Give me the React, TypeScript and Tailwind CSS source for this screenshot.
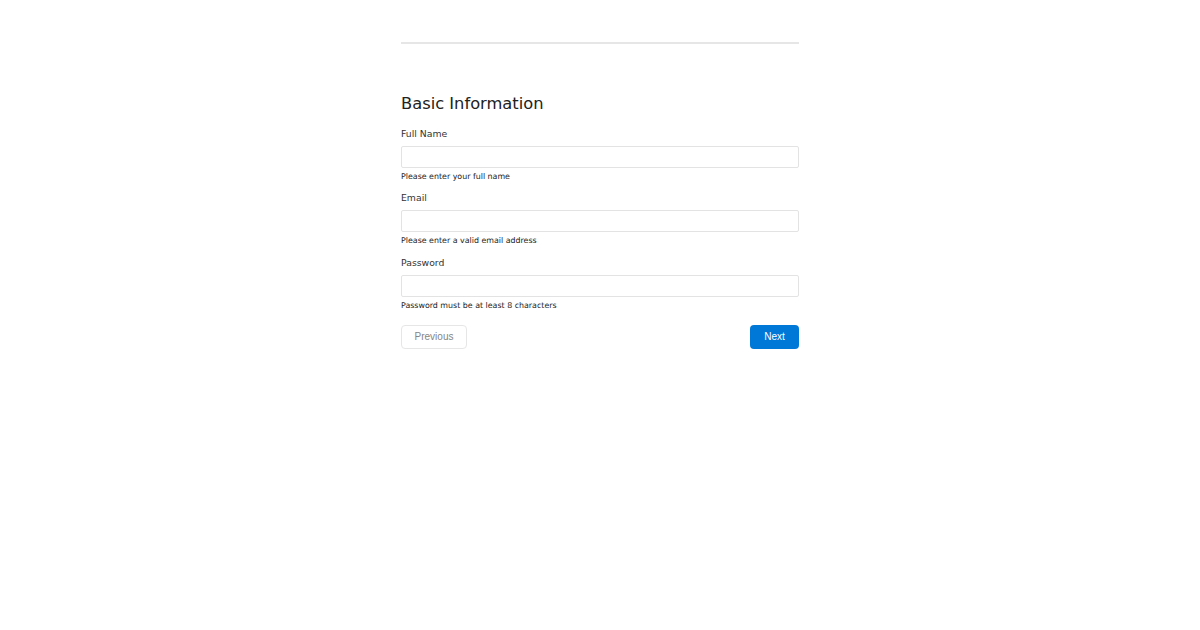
import React from "react";

const fields = [
  { label: "Full Name", type: "text", help: "Please enter your full name" },
  { label: "Email", type: "email", help: "Please enter a valid email address" },
  { label: "Password", type: "password", help: "Password must be at least 8 characters" },
];

export default function App() {
  return (
    <div className="min-h-screen bg-white font-['DejaVu_Sans',sans-serif] text-[#333]">
      <div className="mx-auto w-[398px] pt-[42px]">
        {/* progress track */}
        <div className="h-[2px] bg-[#e6e6e6]" />

        <h2 className="mt-[50px] text-[16.3px] leading-[20px] text-[#222]">Basic Information</h2>

        <form className="mt-[14px]" onSubmit={(e) => e.preventDefault()}>
          {fields.map((f, i) => (
            <div key={f.label} className={i > 0 ? "mt-[10.4px]" : ""}>
              <label className="block text-[9.3px] leading-[12px] text-[#333]">{f.label}</label>
              <input
                type={f.type}
                className="mt-[6px] block h-[22px] w-full rounded-[2px] border border-[#e3e3e3] bg-white px-2 text-[11px] outline-none"
              />
              <p className="mt-[4px] text-[7.9px] leading-[10px] text-[#222]">{f.help}</p>
            </div>
          ))}

          <div className="mt-[14px] flex items-center justify-between font-['Liberation_Sans',Arial,sans-serif]">
            <button
              type="button"
              className="h-[24px] w-[66px] rounded-[4px] border border-[#e6e6e6] bg-white text-[10px] text-[#858585]"
            >
              Previous
            </button>
            <button
              type="submit"
              className="h-[24px] w-[49px] rounded-[4px] bg-[#0078d7] text-[10px] text-white"
            >
              Next
            </button>
          </div>
        </form>
      </div>
    </div>
  );
}
